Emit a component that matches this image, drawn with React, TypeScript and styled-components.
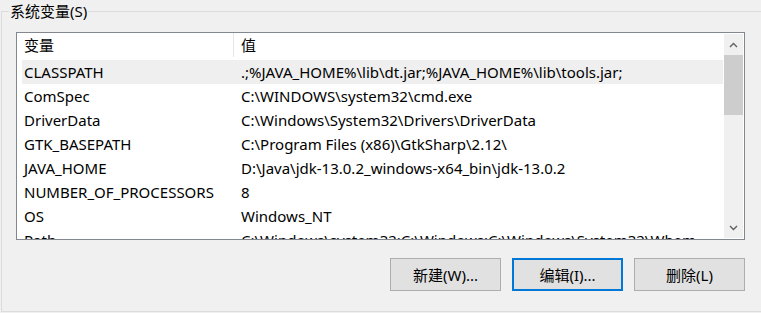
import styled, { createGlobalStyle, css } from "styled-components";

type EnvVar = {
  name: string;
  value: string;
};

const vars: EnvVar[] = [
  { name: "CLASSPATH", value: ".;%JAVA_HOME%\\lib\\dt.jar;%JAVA_HOME%\\lib\\tools.jar;" },
  { name: "ComSpec", value: "C:\\WINDOWS\\system32\\cmd.exe" },
  { name: "DriverData", value: "C:\\Windows\\System32\\Drivers\\DriverData" },
  { name: "GTK_BASEPATH", value: "C:\\Program Files (x86)\\GtkSharp\\2.12\\" },
  { name: "JAVA_HOME", value: "D:\\Java\\jdk-13.0.2_windows-x64_bin\\jdk-13.0.2" },
  { name: "NUMBER_OF_PROCESSORS", value: "8" },
  { name: "OS", value: "Windows_NT" },
  { name: "Path", value: "C:\\Windows\\system32;C:\\Windows;C:\\Windows\\System32\\Wbem" },
];

export default function App() {
  return (
    <>
      <GlobalStyle />
      <StyledGroup>
        <legend>系统变量(S)</legend>
        <div className="group-body">
          <ListView>
            <div className="list-content">
              <HeaderRow>
                <div className="col-name">变量</div>
                <div>值</div>
              </HeaderRow>
              {vars.map((el, idx) => (
                <VarRow key={el.name} selected={idx === 0}>
                  <div>{el.name}</div>
                  <div>{el.value}</div>
                </VarRow>
              ))}
            </div>
            <ScrollBar>
              <div className="arrow">
                <svg width="9" height="6" viewBox="0 0 9 6">
                  <path d="M1 5 L4.5 1.5 L8 5" fill="none" stroke="#606060" strokeWidth="1.4" />
                </svg>
              </div>
              <div className="thumb" />
              <div className="track" />
              <div className="arrow">
                <svg width="9" height="6" viewBox="0 0 9 6">
                  <path d="M1 1 L4.5 4.5 L8 1" fill="none" stroke="#606060" strokeWidth="1.4" />
                </svg>
              </div>
            </ScrollBar>
          </ListView>
          <ButtonBar>
            <DialogButton>新建(W)...</DialogButton>
            <DialogButton focused>编辑(I)...</DialogButton>
            <DialogButton>删除(L)</DialogButton>
          </ButtonBar>
        </div>
      </StyledGroup>
    </>
  );
}

const GlobalStyle = createGlobalStyle`
  html, body {
    margin: 0;
    overflow: hidden;
    background: #f0f0f0;
  }
  body {
    font-family: "Noto Sans", "Noto Sans CJK SC", sans-serif;
    font-size: 15px;
    color: #000;
  }
`;

const StyledGroup = styled.fieldset`
  box-sizing: border-box;
  margin: 0 0 0 1px;
  padding: 10px 0 19px 14px;
  width: 780px;
  height: 312px;
  border: 1px solid #dcdcdc;
  legend {
    margin-left: -7px;
    padding: 0 1px;
    line-height: 22px;
    font-size: 15px;
  }
  .group-body {
    width: 729px;
    display: flex;
    flex-direction: column;
    gap: 18px;
  }
`;

const ListView = styled.div`
  box-sizing: border-box;
  height: 208px;
  border: 1px solid #828790;
  background: #fff;
  display: flex;
  .list-content {
    flex: 1;
    overflow: hidden;
    padding-left: 5px;
  }
`;

const HeaderRow = styled.div`
  position: relative;
  display: grid;
  grid-template-columns: 217px 1fr;
  height: 24px;
  line-height: 24px;
  padding-left: 2px;
  margin-bottom: 3px;
  white-space: nowrap;
  .col-name::after {
    content: '';
    position: absolute;
    top: 0;
    left: 211px;
    width: 1px;
    height: 24px;
    background: #e5e5e5;
  }
`;

const VarRow = styled.div<{ selected?: boolean }>`
  display: grid;
  grid-template-columns: 217px 1fr;
  height: 24px;
  line-height: 24px;
  padding-left: 2px;
  white-space: nowrap;
  ${props => props.selected && css`background: #efefef;`}
`;

const ScrollBar = styled.div`
  width: 19px;
  margin: 1px;
  background: #f0f0f0;
  display: flex;
  flex-direction: column;
  .arrow {
    height: 21px;
    display: flex;
    align-items: center;
    justify-content: center;
  }
  .thumb {
    height: 60px;
    background: #cdcdcd;
  }
  .track {
    flex: 1;
  }
`;

const ButtonBar = styled.div`
  display: flex;
  justify-content: flex-end;
  gap: 11px;
`;

const DialogButton = styled.button<{ focused?: boolean }>`
  box-sizing: border-box;
  width: 111px;
  height: 33px;
  padding: 0;
  background: #e1e1e1;
  border: 1px solid #adadad;
  font-family: "Noto Sans", "Noto Sans CJK SC", sans-serif;
  font-size: 15px;
  color: #000;
  ${props => props.focused && css`border: 2px solid #0078d7;`}
`;
